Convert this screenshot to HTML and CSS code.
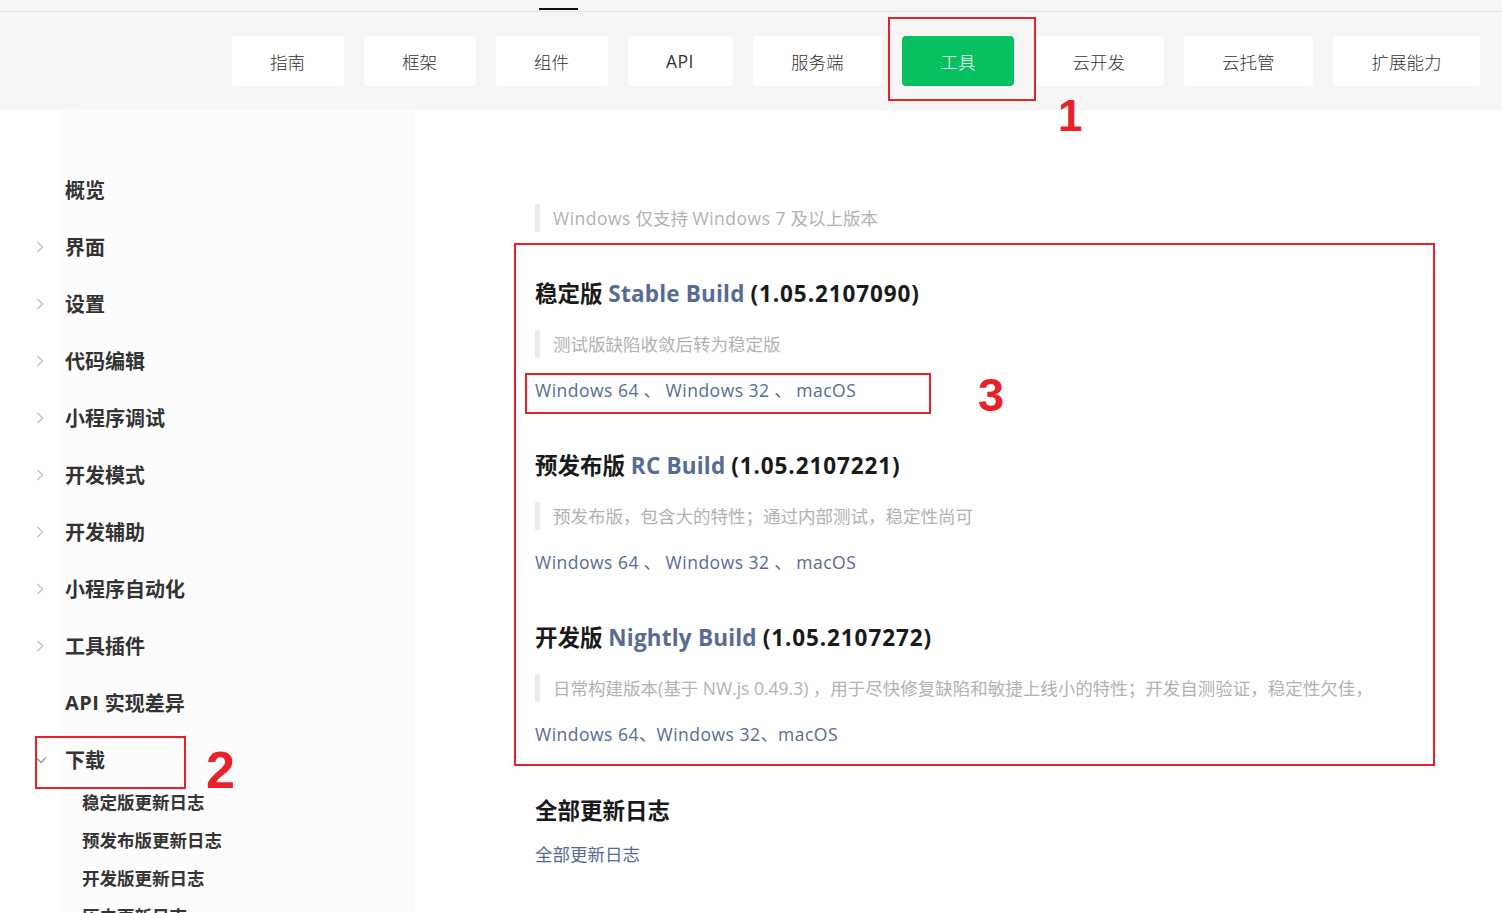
FILE: index.html
```html
<!DOCTYPE html>
<html lang="zh-CN">

<head>
    <meta charset="UTF-8">
    <meta name="viewport" content="width=device-width, initial-scale=1.0">
    <title>下载 - 开发者工具</title>
    <link rel="stylesheet" href="styles.css">
</head>

<body>
    <div class="topbar">
        <span class="topbar-mark"></span>
    </div>

    <nav class="nav">
        <a class="nav-item">指南</a>
        <a class="nav-item">框架</a>
        <a class="nav-item">组件</a>
        <a class="nav-item latin">API</a>
        <a class="nav-item">服务端</a>
        <a class="nav-item active">工具</a>
        <a class="nav-item">云开发</a>
        <a class="nav-item">云托管</a>
        <a class="nav-item">扩展能力</a>
    </nav>

    <div class="page">
        <aside class="sidebar">
            <ul class="menu">
                <li class="menu-item"><span class="arrow"></span>概览</li>
                <li class="menu-item"><span class="arrow"><svg viewBox="0 0 8 12" width="8" height="12"><polyline points="1.5,1 6.5,6 1.5,11" /></svg></span>界面</li>
                <li class="menu-item"><span class="arrow"><svg viewBox="0 0 8 12" width="8" height="12"><polyline points="1.5,1 6.5,6 1.5,11" /></svg></span>设置</li>
                <li class="menu-item"><span class="arrow"><svg viewBox="0 0 8 12" width="8" height="12"><polyline points="1.5,1 6.5,6 1.5,11" /></svg></span>代码编辑</li>
                <li class="menu-item"><span class="arrow"><svg viewBox="0 0 8 12" width="8" height="12"><polyline points="1.5,1 6.5,6 1.5,11" /></svg></span>小程序调试</li>
                <li class="menu-item"><span class="arrow"><svg viewBox="0 0 8 12" width="8" height="12"><polyline points="1.5,1 6.5,6 1.5,11" /></svg></span>开发模式</li>
                <li class="menu-item"><span class="arrow"><svg viewBox="0 0 8 12" width="8" height="12"><polyline points="1.5,1 6.5,6 1.5,11" /></svg></span>开发辅助</li>
                <li class="menu-item"><span class="arrow"><svg viewBox="0 0 8 12" width="8" height="12"><polyline points="1.5,1 6.5,6 1.5,11" /></svg></span>小程序自动化</li>
                <li class="menu-item"><span class="arrow"><svg viewBox="0 0 8 12" width="8" height="12"><polyline points="1.5,1 6.5,6 1.5,11" /></svg></span>工具插件</li>
                <li class="menu-item"><span class="arrow"></span><span class="latin">API</span>&nbsp;实现差异</li>
                <li class="menu-item open"><span class="arrow"><svg viewBox="0 0 12 8" width="12" height="8"><polyline points="1,1.5 6,6.5 11,1.5" /></svg></span>下载</li>
                <li>
                    <ul class="submenu">
                        <li>稳定版更新日志</li>
                        <li>预发布版更新日志</li>
                        <li>开发版更新日志</li>
                        <li>历史更新日志</li>
                    </ul>
                </li>
            </ul>
        </aside>

        <main class="content">
            <blockquote class="note"><span class="latin">Windows</span> 仅支持 <span class="latin">Windows 7</span> 及以上版本</blockquote>

            <section class="build">
                <h2>稳定版 <a>Stable Build</a> <span class="ver">(1.05.2107090)</span></h2>
                <blockquote class="note">测试版缺陷收敛后转为稳定版</blockquote>
                <p class="links"><a>Windows 64</a> 、 <a>Windows 32</a> 、 <a>macOS</a></p>
            </section>

            <section class="build">
                <h2>预发布版 <a>RC Build</a> <span class="ver">(1.05.2107221)</span></h2>
                <blockquote class="note">预发布版，包含大的特性；通过内部测试，稳定性尚可</blockquote>
                <p class="links"><a>Windows 64</a> 、 <a>Windows 32</a> 、 <a>macOS</a></p>
            </section>

            <section class="build">
                <h2>开发版 <a>Nightly Build</a> <span class="ver">(1.05.2107272)</span></h2>
                <blockquote class="note">日常构建版本(基于 NW.js 0.49.3) ，用于尽快修复缺陷和敏捷上线小的特性；开发自测验证，稳定性欠佳，</blockquote>
                <p class="links"><a>Windows 64</a>、<a>Windows 32</a>、<a>macOS</a></p>
            </section>

            <section class="changelog">
                <h2>全部更新日志</h2>
                <p class="links"><a>全部更新日志</a></p>
            </section>
        </main>
    </div>

    <!-- red markup drawn over the screenshot -->
    <div class="mark mark-tools"></div>
    <div class="mark-num num-1">1</div>
    <div class="mark mark-download"></div>
    <div class="mark-num num-2">2</div>
    <div class="mark mark-builds"></div>
    <div class="mark mark-links"></div>
    <div class="mark-num num-3">3</div>
</body>

</html>
```

FILE: styles.css
```css
body {
    margin: 0;
    height: 913px;
    overflow: hidden;
    background-color: #fff;
    color: #333;
    font-family: "Open Sans", "Noto Sans CJK SC", sans-serif;
    font-size: 17.5px;
}

a {
    color: #576b95;
    text-decoration: none;
}

ul {
    margin: 0;
    padding: 0;
    list-style: none;
}

.latin {
    letter-spacing: 0.5px;
}

.topbar {
    height: 11px;
    background-color: #f5f5f5;
    border-bottom: 1px solid #e4e4e4;
    display: flex;
    align-items: flex-end;
}

.topbar-mark {
    margin-left: 539px;
    margin-bottom: 1px;
    width: 39px;
    height: 2px;
    background-color: #111;
}

.nav {
    height: 74px;
    padding: 24px 22px 0 0;
    background-color: #f6f6f6;
    display: flex;
    justify-content: flex-end;
    gap: 20px;
}

.nav-item {
    height: 50px;
    padding: 0 38.5px;
    display: flex;
    align-items: center;
    justify-content: center;
    background-color: #fff;
    border-radius: 4px;
    color: #333;
    font-weight: 300;
}

.nav-item.latin {
    letter-spacing: 0.5px;
    font-weight: 400;
}

.nav-item.active {
    background-color: #07c160;
    color: #fff;
}

.page {
    display: flex;
    height: 802px;
}

.sidebar {
    width: 415px;
    flex-shrink: 0;
    padding-top: 51px;
    background: linear-gradient(to right, #fff 61px, #fdfdfd 61px, #fcfcfc 300px, #fbfbfb 415px);
}

.menu-item {
    height: 57px;
    display: flex;
    align-items: center;
    font-size: 20px;
    font-weight: 700;
    color: #333;
}

.arrow {
    width: 65px;
    padding-left: 36px;
    box-sizing: border-box;
    display: flex;
    align-items: center;
}

.arrow svg {
    fill: none;
    stroke: #c2c2c2;
    stroke-width: 1.4;
}

.menu-item.open .arrow {
    padding-left: 35px;
}

.menu-item.open .arrow svg {
    stroke: #999;
}

.submenu {
    margin-top: -5px;
    padding-left: 82px;
}

.submenu li {
    height: 38px;
    line-height: 38px;
    font-size: 17.5px;
    font-weight: 700;
    color: #353535;
}

.content {
    flex: 1;
    padding: 94px 0 0 120px;
}

.note {
    margin: 0;
    padding-left: 13px;
    border-left: 5px solid #ebebeb;
    line-height: 28px;
    color: #b2b2b2;
}

.build h2,
.changelog h2 {
    margin: 0;
    line-height: 32px;
    font-size: 22.5px;
    font-weight: 700;
    color: #1a1a1a;
}

.build h2 a {
    letter-spacing: 0.2px;
}

.build h2 .ver {
    letter-spacing: 0.9px;
}

.build {
    margin-top: 46px;
}

.build .note {
    margin-top: 20px;
}

.links {
    margin: 18px 0 0;
    line-height: 28px;
    color: #576b95;
}

.links a {
    letter-spacing: 0.5px;
}

.changelog {
    margin-top: 47px;
}

.changelog .links {
    margin-top: 13px;
}

.changelog .links a {
    letter-spacing: 0;
}

.mark {
    position: absolute;
    border: 2px solid #e8212b;
    box-sizing: border-box;
}

.mark-tools {
    left: 888px;
    top: 17px;
    width: 148px;
    height: 84px;
}

.mark-download {
    left: 35px;
    top: 736px;
    width: 151px;
    height: 53px;
}

.mark-builds {
    left: 514px;
    top: 243px;
    width: 921px;
    height: 523px;
}

.mark-links {
    left: 525px;
    top: 373px;
    width: 406px;
    height: 41px;
}

.mark-num {
    position: absolute;
    color: #e8212b;
    font-family: "Liberation Sans", sans-serif;
    font-weight: 700;
    line-height: 1;
}

.num-1 {
    left: 1058px;
    top: 94px;
    font-size: 44px;
}

.num-2 {
    left: 206px;
    top: 744px;
    font-size: 52px;
}

.num-3 {
    left: 978px;
    top: 371px;
    font-size: 47px;
}
```
